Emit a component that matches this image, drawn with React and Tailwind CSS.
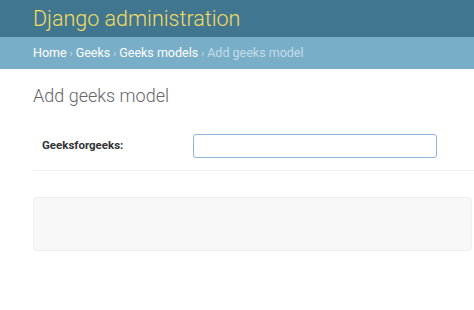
const crumbs = ["Home", "Geeks", "Geeks models"];

const App = () => {
    return (
        <div className="w-[474px] h-[310px] overflow-hidden bg-white font-['Roboto',sans-serif]">
            <div className="h-[37px] bg-[#417690] pl-[33px] flex items-center">
                <h1 className="text-[21.5px] font-light text-[#f5dd5d] leading-none">Django administration</h1>
            </div>
            <div className="h-[32px] bg-[#79aec8] pl-[33px] flex items-center text-[12.5px] text-white">
                {crumbs.map((c) => (
                    <span key={c} className="flex items-center">
                        <span>{c}</span>
                        <span className="mx-[3px] text-[10px] text-[#c4dce8]">›</span>
                    </span>
                ))}
                <span className="text-[#c4dce8]">Add geeks model</span>
            </div>
            <div className="pl-[33px] pt-[18px]">
                <h2 className="text-[18px] font-light text-[#666] leading-none">Add geeks model</h2>
                <div className="mt-[16px] flex items-center h-[50px] border-b border-[#eee]">
                    <label className="w-[160px] pl-[9px] text-[11.5px] font-bold text-[#333]">Geeksforgeeks:</label>
                    <input type="text" className="w-[244px] h-[24px] border border-[#8fb3d6] rounded-[3px] outline-none" />
                </div>
                <div className="mt-[26px] mr-[2px] h-[54px] bg-[#f8f8f8] border border-[#eee] rounded-[4px]"></div>
            </div>
        </div>
    )
}

export default App
